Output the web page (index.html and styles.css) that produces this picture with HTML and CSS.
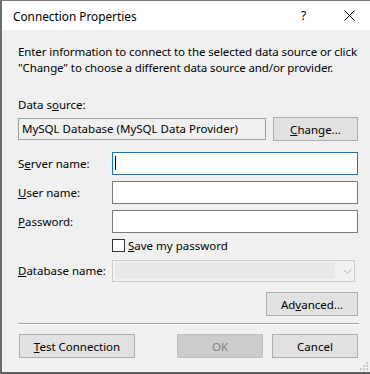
FILE: index.html
```html
<!DOCTYPE html>
<html>
<head>
<meta charset="utf-8">
<link rel="stylesheet" href="styles.css">
</head>
<body>
<div class="window">
  <div class="titlebar">
    <span class="title">Connection Properties</span>
    <span class="help">?</span>
    <span class="close">
      <svg width="11" height="11" viewBox="0 0 11 11"><path d="M0.5 0.5 L10.5 10.5 M10.5 0.5 L0.5 10.5" stroke="#000" stroke-width="1" fill="none"/></svg>
    </span>
  </div>
  <div class="content">
    <p class="intro">Enter information to connect to the selected data source or click<br>"Change" to choose a different data source and/or provider.</p>
    <div class="ds-label">Data s<u>o</u>urce:</div>
    <div class="ds-row">
      <div class="ds-box">MySQL Database (MySQL Data Provider)</div>
      <button class="btn btn-change"><u>C</u>hange...</button>
    </div>
    <div class="form">
      <label class="lbl">S<u>e</u>rver name:</label>
      <div class="input focused"><span class="caret"></span></div>
      <label class="lbl"><u>U</u>ser name:</label>
      <div class="input"></div>
      <label class="lbl"><u>P</u>assword:</label>
      <div class="input"></div>
      <span></span>
      <div class="check-row"><span class="checkbox"></span><span class="check-label"><u>S</u>ave my password</span></div>
      <label class="lbl lbl-db"><u>D</u>atabase name:</label>
      <div class="combo">
        <span class="combo-field"></span>
        <svg class="chev" width="9" height="5" viewBox="0 0 9 5"><path d="M0.5 0.5 L4.5 4.5 L8.5 0.5" stroke="#b4b4b4" stroke-width="1" fill="none"/></svg>
      </div>
    </div>
    <div class="adv-row"><button class="btn btn-adv">Ad<u>v</u>anced...</button></div>
    <div class="separator"></div>
    <div class="bottom-row">
      <button class="btn btn-test"><u>T</u>est Connection</button>
      <span class="spacer"></span>
      <button class="btn btn-ok" disabled>OK</button>
      <button class="btn btn-cancel">Cancel</button>
    </div>
  </div>
  <svg class="grip" width="9" height="9" viewBox="0 0 9 9">
    <rect x="6" y="0" width="2" height="2" fill="#c8c8c8"/>
    <rect x="3" y="3" width="2" height="2" fill="#c8c8c8"/>
    <rect x="6" y="3" width="2" height="2" fill="#c8c8c8"/>
    <rect x="0" y="6" width="2" height="2" fill="#c8c8c8"/>
    <rect x="3" y="6" width="2" height="2" fill="#c8c8c8"/>
    <rect x="6" y="6" width="2" height="2" fill="#c8c8c8"/>
  </svg>
</div>
</body>
</html>
```

FILE: styles.css
```css
* { box-sizing: border-box; }
html, body { margin: 0; padding: 0; background: #f0f0f0; }
body {
  font-family: "Noto Sans", "Open Sans", sans-serif;
  font-size: 11.5px;
  color: #000;
}
.window {
  position: relative;
  width: 370px;
  height: 374px;
  background: #f0f0f0;
  border-top: 1px solid #7a7a7a;
  border-left: 2px solid #6b6b6b;
  border-bottom: 2px solid #5f5f5f;
  display: flex;
  flex-direction: column;
}
.titlebar {
  height: 29px;
  background: #fff;
  display: flex;
  align-items: center;
  padding-left: 11px;
  flex: none;
}
.title { flex: 1; font-size: 11.8px; }
.help { width: 10px; margin-right: 33px; font-size: 12px; }
.close { width: 11px; height: 11px; margin-right: 15px; display: flex; }
.content {
  padding: 14px 12px 0 16px;
  display: flex;
  flex-direction: column;
}
.intro { margin: 0; line-height: 16px; white-space: nowrap; letter-spacing: -0.1px; }
.ds-label { margin-top: 21px; line-height: 16px; }
.ds-row { margin-top: 4px; display: flex; gap: 7px; height: 24px; }
.ds-box {
  width: 248px;
  height: 22px;
  border: 1px solid #a0a0a0;
  background: #f0f0f0;
  padding-left: 3px;
  line-height: 20px;
  margin-top: 1px;
  white-space: nowrap;
}
.btn {
  font: inherit;
  color: #000;
  background: #e1e1e1;
  border: 1px solid #adadad;
  padding: 0;
  height: 24px;
  text-align: center;
}
.btn-change { flex: 1; }
.form {
  margin-top: 11px;
  display: grid;
  grid-template-columns: 94px 1fr;
  row-gap: 6px;
  align-items: center;
}
.lbl { line-height: 16px; white-space: nowrap; }
.input {
  height: 23px;
  border: 1px solid #7a7a7a;
  background: #fff;
  position: relative;
}
.input.focused { border-color: #0078d7; }
.caret {
  position: absolute;
  left: 2px;
  top: 3px;
  width: 1px;
  height: 14px;
  background: #000;
}
.check-row { display: flex; align-items: center; height: 13px; }
.checkbox {
  width: 13px;
  height: 13px;
  border: 1px solid #333;
  background: #fff;
  margin-right: 3px;
  flex: none;
}
.check-label { line-height: 16px; }
.lbl-db { margin-top: 2px; }
.combo {
  margin-top: 2px;
  width: 243px;
  height: 22px;
  border: 1px solid #cccccc;
  background: #f0f0f0;
  display: flex;
  align-items: center;
  padding: 2px;
}
.combo-field {
  width: 220px;
  height: 16px;
  background: #e8e8e8;
}
.chev { margin-left: 8px; }
.adv-row { margin-top: 10px; display: flex; justify-content: flex-end; }
.btn-adv { width: 92px; }
.separator {
  margin-top: 7px;
  height: 2px;
  border-top: 1px solid #a0a0a0;
  border-bottom: 1px solid #fff;
  margin-right: -1px;
  margin-left: 0;
}
.bottom-row { margin-top: 9px; display: flex; gap: 9px; }
.btn-test { width: 116px; margin-left: 1px; }
.spacer { flex: 1; }
.btn-ok { width: 86px; background: #cccccc; border-color: #bfbfbf; color: #838383; }
.btn-cancel { width: 86px; }
.grip { position: absolute; right: 1px; bottom: 1px; }
```
